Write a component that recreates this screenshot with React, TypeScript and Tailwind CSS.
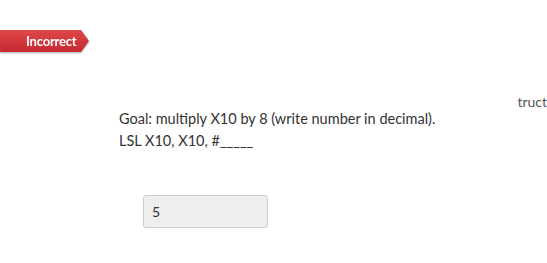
export default function App() {
  return (
    <div className="w-[547px] h-[263px] bg-white overflow-hidden font-['Lato',sans-serif] text-[#333]">
      <div className="pt-[30px]">
        <div className="relative w-[89px] h-[22px] drop-shadow-[0_1px_1px_rgba(0,0,0,0.35)]">
          <svg className="absolute inset-0" width="89" height="22" viewBox="0 0 89 22">
            <defs>
              <linearGradient id="rg" x1="0" y1="0" x2="0" y2="1">
                <stop offset="0" stopColor="#e0474b" />
                <stop offset="1" stopColor="#c42a2f" />
              </linearGradient>
            </defs>
            <path d="M0 0 H81 L89 11 L81 22 H0 Z" fill="url(#rg)" />
          </svg>
          <span className="relative block pl-[26px] leading-[22px] text-[13px] font-bold text-white tracking-[-0.2px]">
            Incorrect
          </span>
        </div>
      </div>
      <div className="mt-[41px] flex justify-end">
        <span className="text-[14px] leading-[18px] text-[#555]">truct</span>
      </div>
      <div className="pl-[119px] mt-[-3px] text-[14.5px] leading-[22px]">
        <p>Goal: multiply X10 by 8 (write number in decimal).</p>
        <p>LSL X10, X10, #_____</p>
      </div>
      <div className="pl-[143px] pt-[43px]">
        <div className="w-[125px] h-[33px] rounded-[3px] border border-[#ccc] bg-[#eee] flex items-center px-[8px] text-[14px] text-[#333]">
          5
        </div>
      </div>
    </div>
  )
}
